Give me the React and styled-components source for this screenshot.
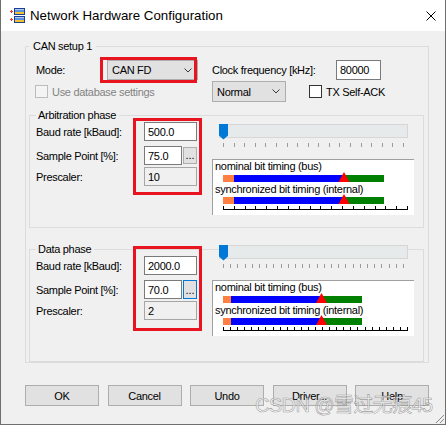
import React from 'react';
import styled, { createGlobalStyle } from 'styled-components';

const Global = createGlobalStyle`
  html, body { margin: 0; padding: 0; background: #ffffff; }
  body { font-family: "Liberation Sans", Arial, sans-serif; }
  * { box-sizing: border-box; }
`;

const Window = styled.div`
  position: relative;
  width: 446px;
  height: 425px;
  display: flex;
  flex-direction: column;
  border: 1px solid #6f6f6f;
  border-top: none;
  background: #f0f0f0;
  font-family: "Liberation Sans", Arial, sans-serif;
  font-size: 11px;
  letter-spacing: -0.3px;
  color: #000;
  overflow: hidden;
`;

const TitleBar = styled.div`
  height: 31px;
  flex: none;
  background: #ffffff;
  display: flex;
  align-items: center;
  padding-left: 8px;
  padding-right: 9px;
`;

const TitleText = styled.span`
  margin-left: 5px;
  font-size: 13.3px;
  letter-spacing: 0;
  color: #000;
`;

const CloseBox = styled.span`
  margin-left: auto;
  display: flex;
`;

const Body = styled.div`
  flex: 1;
  display: flex;
  flex-direction: column;
  padding: 8px 0 0 24px;
`;

const Group = styled.fieldset`
  margin: 0;
  min-width: 0;
  width: ${p => p.$w}px;
  border: 1px solid #dcdcdc;
  padding: 0 ${p => p.$pr}px ${p => p.$pb}px ${p => p.$pl}px;
  margin-top: ${p => p.$mt || 0}px;
`;

const Legend = styled.legend`
  padding: 0 ${p => p.$pr}px 0 ${p => p.$pl}px;
  line-height: 14px;
  font-size: 11px;
  float: none;
`;

const TopSection = styled.div`
  display: flex;
  height: 55px;
`;

const TopLeft = styled.div`
  width: 183px;
  display: flex;
  flex-direction: column;
  padding-top: 7px;
`;

const TopRight = styled.div`
  display: flex;
  flex-direction: column;
  padding-top: 7px;
`;

const Row = styled.div`
  display: flex;
  align-items: center;
  height: ${p => p.$h}px;
  margin-top: ${p => p.$mt || 0}px;
  padding-left: ${p => p.$pl || 0}px;
`;

const Label = styled.span`
  width: ${p => p.$w}px;
  padding-left: ${p => p.$pl || 0}px;
  white-space: nowrap;
  flex: none;
`;

const Combo = styled.div`
  width: ${p => p.$w}px;
  height: ${p => p.$h}px;
  flex: none;
  display: flex;
  align-items: center;
  justify-content: space-between;
  padding: 0 5px 0 4px;
  background: #e1e1e1;
  border: 1px solid #adadad;
`;

const CheckBox = styled.span`
  width: 13px;
  height: 13px;
  flex: none;
  margin-left: ${p => p.$ml || 0}px;
  background: ${p => (p.$disabled ? '#f4f4f4' : '#ffffff')};
  border: 1px solid ${p => (p.$disabled ? '#bcbcbc' : '#333333')};
`;

const CheckText = styled.span`
  margin-left: 4px;
  white-space: nowrap;
  color: ${p => (p.$disabled ? '#838383' : '#000')};
`;

const Edit = styled.input`
  width: ${p => p.$w}px;
  height: ${p => p.$h || 19}px;
  flex: none;
  margin: 0;
  padding: 0 3px;
  font: inherit;
  letter-spacing: inherit;
  color: #000;
  border: 1px solid ${p => (p.$disabled ? '#a6a6a6' : '#7a7a7a')};
  background: ${p => (p.$disabled ? '#f0f0f0' : '#ffffff')};
  outline: none;
`;

const DotsButton = styled.button`
  width: 14px;
  height: ${p => (p.$focus ? 19 : 17)}px;
  margin: 0 0 0 1px;
  padding: 0 0 2px;
  flex: none;
  font: inherit;
  letter-spacing: 0;
  line-height: 1;
  display: flex;
  align-items: flex-end;
  justify-content: center;
  background: #e1e1e1;
  border: 1px solid ${p => (p.$focus ? '#0078d7' : '#adadad')};
  color: #000;
`;

const PhaseBody = styled.div`
  display: flex;
`;

const LeftCol = styled.div`
  width: 176px;
  flex: none;
  display: flex;
  flex-direction: column;
`;

const RightCol = styled.div`
  width: 202px;
  flex: none;
  display: flex;
  flex-direction: column;
  margin-top: ${p => p.$mt}px;
`;

const SliderTrack = styled.div`
  margin-left: 7px;
  width: 189px;
  height: 14px;
  display: flex;
  background: #e7eaea;
  border: 1px solid #d6d6d6;
`;

const ThumbSvg = styled.svg`
  flex: none;
  margin: -1px 0 0 -1px;
  overflow: visible;
`;

const SliderTicks = styled.svg`
  display: block;
  margin: 5px 0 0 7px;
`;

const BitBox = styled.div`
  margin-top: 12px;
  width: 202px;
  height: 56px;
  background: #ffffff;
  border-top: 1px solid #a0a0a0;
  border-left: 1px solid #a0a0a0;
  display: flex;
  flex-direction: column;
`;

const BitLabel = styled.div`
  height: 13px;
  line-height: 13px;
  padding-left: 2px;
  white-space: nowrap;
`;

const BarSvg = styled.svg`
  display: block;
  flex: none;
  margin-top: ${p => p.$mt}px;
`;

const ButtonRow = styled.div`
  width: 404px;
  margin-top: 22px;
  display: flex;
  justify-content: space-between;
`;

const DlgButton = styled.button`
  width: 74px;
  height: 21px;
  margin: 0;
  padding: 0;
  font: inherit;
  letter-spacing: inherit;
  color: #000;
  background: #e1e1e1;
  border: 1px solid #adadad;
`;

const Highlight = styled.div`
  position: absolute;
  left: ${p => p.$x - 1}px;
  top: ${p => p.$y}px;
  width: ${p => p.$w}px;
  height: ${p => p.$h}px;
  border: ${p => p.$t}px solid #e8141f;
  pointer-events: none;
`;

const Watermark = styled.div`
  position: absolute;
  left: 254px;
  top: 394px;
  font-family: "Liberation Sans", "Noto Sans CJK SC", sans-serif;
  font-size: 20px;
  line-height: 22px;
  letter-spacing: -0.6px;
  white-space: nowrap;
  color: rgba(250, 250, 250, 0.75);
  -webkit-text-stroke: 0.6px rgba(105, 105, 105, 0.62);
  pointer-events: none;
`;

const Grip = styled.svg`
  position: absolute;
  right: 0;
  bottom: 0;
`;

const px = v => Math.round(v) + 0.5;
const range = (x0, x1, n) => Array.from({ length: n + 1 }, (_, i) => x0 + ((x1 - x0) * i) / n);

function AppIcon() {
  const row = y => (
    <g key={y}>
      <path d={`M1 ${y + 3.5}h3M2.5 ${y + 2}v3`} stroke="#e23b2a" strokeWidth="1" />
      <rect x="5.5" y={y + 0.5} width="10" height="6" fill="#5d93db" stroke="#1d3f8f" />
      <rect x="6" y={y + 4} width="9" height="2" fill="#f2c230" />
      <rect x="6" y={y + 1} width="9" height="1" fill="#a9cdf5" />
    </g>
  );
  return (
    <svg width="16" height="15" viewBox="0 0 16 15">
      {row(0)}
      {row(8)}
    </svg>
  );
}

function CloseIcon() {
  return (
    <svg width="10" height="10" viewBox="0 0 10 10">
      <path d="M0.5 0.5L9.5 9.5M9.5 0.5L0.5 9.5" stroke="#000" strokeWidth="1" />
    </svg>
  );
}

function Chevron() {
  return (
    <svg width="8" height="5" viewBox="0 0 8 5">
      <polyline points="0.5,0.5 4,4 7.5,0.5" fill="none" stroke="#3a3a3a" strokeWidth="1" />
    </svg>
  );
}

function Slider({ ticks }) {
  return (
    <>
      <SliderTrack>
        <ThumbSvg width="9" height="16" viewBox="0 0 9 16">
          <path d="M0 0H9V11.5L4.5 15.5L0 11.5Z" fill="#0078d7" />
        </ThumbSvg>
      </SliderTrack>
      <SliderTicks width="189" height="4">
        {range(4, 184, ticks).map((x, i) => (
          <line key={i} x1={px(x)} x2={px(x)} y1="0" y2="4" stroke="#9a9a9a" />
        ))}
      </SliderTicks>
    </>
  );
}

function BitBar({ t, mt }) {
  const { o, s, g } = t;
  return (
    <BarSvg width="201" height="11" $mt={mt}>
      <rect x="10" y="3" width={o - 10} height="7" fill="#ff8040" />
      <rect x={o} y="3" width={s - o} height="7" fill="#0000ff" />
      <rect x={s} y="3" width={g - s} height="7" fill="#008000" />
      <polygon points={`${s - 5.5},10 ${s + 5.5},10 ${s},0`} fill="#ff0000" />
    </BarSvg>
  );
}

function Ruler({ n }) {
  return (
    <BarSvg width="201" height="7" $mt={0}>
      <line x1="10" x2="194" y1="4.5" y2="4.5" stroke="#000" />
      {range(10, 194, n).map((x, i) => (
        <line key={i} x1={px(x)} x2={px(x)} y1="1" y2="5" stroke="#000" />
      ))}
    </BarSvg>
  );
}

function BitTiming({ t, n }) {
  return (
    <BitBox>
      <BitLabel>nominal bit timing (bus)</BitLabel>
      <BitBar t={t} mt={-1} />
      <BitLabel>synchronized bit timing (internal)</BitLabel>
      <BitBar t={t} mt={-2} />
      <Ruler n={n} />
    </BitBox>
  );
}

function Phase({ title, baud, sample, pre, rightMt, pb, mt, focus, sliderTicks, rulerTicks, timing }) {
  return (
    <Group $w={395} $pl={6} $pr={4} $pb={pb} $mt={mt}>
      <Legend $pl={2} $pr={3}>{title}</Legend>
      <PhaseBody>
        <LeftCol>
          <Row $h={19}>
            <Label $w={108}>Baud rate [kBaud]:</Label>
            <Edit $w={53} readOnly defaultValue={baud} />
          </Row>
          <Row $h={19} $mt={5}>
            <Label $w={108}>Sample Point [%]:</Label>
            <Edit $w={38} readOnly defaultValue={sample} />
            <DotsButton $focus={focus}>...</DotsButton>
          </Row>
          <Row $h={19} $mt={2}>
            <Label $w={108}>Prescaler:</Label>
            <Edit $w={53} $disabled readOnly defaultValue={pre} />
          </Row>
        </LeftCol>
        <RightCol $mt={rightMt}>
          <Slider ticks={sliderTicks} />
          <BitTiming t={timing} n={rulerTicks} />
        </RightCol>
      </PhaseBody>
    </Group>
  );
}

export default function App() {
  return (
    <>
      <Global />
      <Window>
        <TitleBar>
          <AppIcon />
          <TitleText>Network Hardware Configuration</TitleText>
          <CloseBox>
            <CloseIcon />
          </CloseBox>
        </TitleBar>
        <Body>
          <Group $w={404} $pl={3} $pr={4} $pb={0}>
            <Legend $pl={4} $pr={4}>CAN setup 1</Legend>
            <TopSection>
              <TopLeft>
                <Row $h={20}>
                  <Label $w={78} $pl={7}>Mode:</Label>
                  <Combo $w={91} $h={20}>
                    <span>CAN FD</span>
                    <Chevron />
                  </Combo>
                </Row>
                <Row $h={13} $mt={5} $pl={6}>
                  <CheckBox $disabled />
                  <CheckText $disabled>Use database settings</CheckText>
                </Row>
              </TopLeft>
              <TopRight>
                <Row $h={20}>
                  <Label $w={124}>Clock frequency [kHz]:</Label>
                  <Edit $w={45} $h={20} readOnly defaultValue="80000" />
                </Row>
                <Row $h={21} $mt={1}>
                  <Combo $w={74} $h={21}>
                    <span>Normal</span>
                    <Chevron />
                  </Combo>
                  <CheckBox $ml={23} />
                  <CheckText>TX Self-ACK</CheckText>
                </Row>
              </TopRight>
            </TopSection>
            <Phase
              title="Arbitration phase"
              baud="500.0"
              sample="75.0"
              pre="10"
              rightMt={2}
              pb={12}
              sliderTicks={17}
              rulerTicks={17}
              timing={{ o: 21, s: 131, g: 171 }}
            />
            <Phase
              title="Data phase"
              baud="2000.0"
              sample="70.0"
              pre="2"
              rightMt={-11}
              pb={25}
              mt={14}
              focus
              sliderTicks={25}
              rulerTicks={26}
              timing={{ o: 18, s: 108.5, g: 149 }}
            />
          </Group>
          <ButtonRow>
            <DlgButton>OK</DlgButton>
            <DlgButton>Cancel</DlgButton>
            <DlgButton>Undo</DlgButton>
            <DlgButton>Driver...</DlgButton>
            <DlgButton>Help</DlgButton>
          </ButtonRow>
        </Body>
        <Highlight $x={100} $y={57} $w={97} $h={26} $t={3} />
        <Highlight $x={133} $y={118} $w={69} $h={77} $t={3} />
        <Highlight $x={133} $y={246} $w={69} $h={85} $t={3} />
        <Watermark>CSDN @雪过无痕45</Watermark>
        <Grip width="12" height="12" viewBox="0 0 12 12">
          <path d="M11 3L3 11M11 7L7 11" stroke="#8a8a8a" strokeWidth="1" />
        </Grip>
      </Window>
    </>
  );
}
